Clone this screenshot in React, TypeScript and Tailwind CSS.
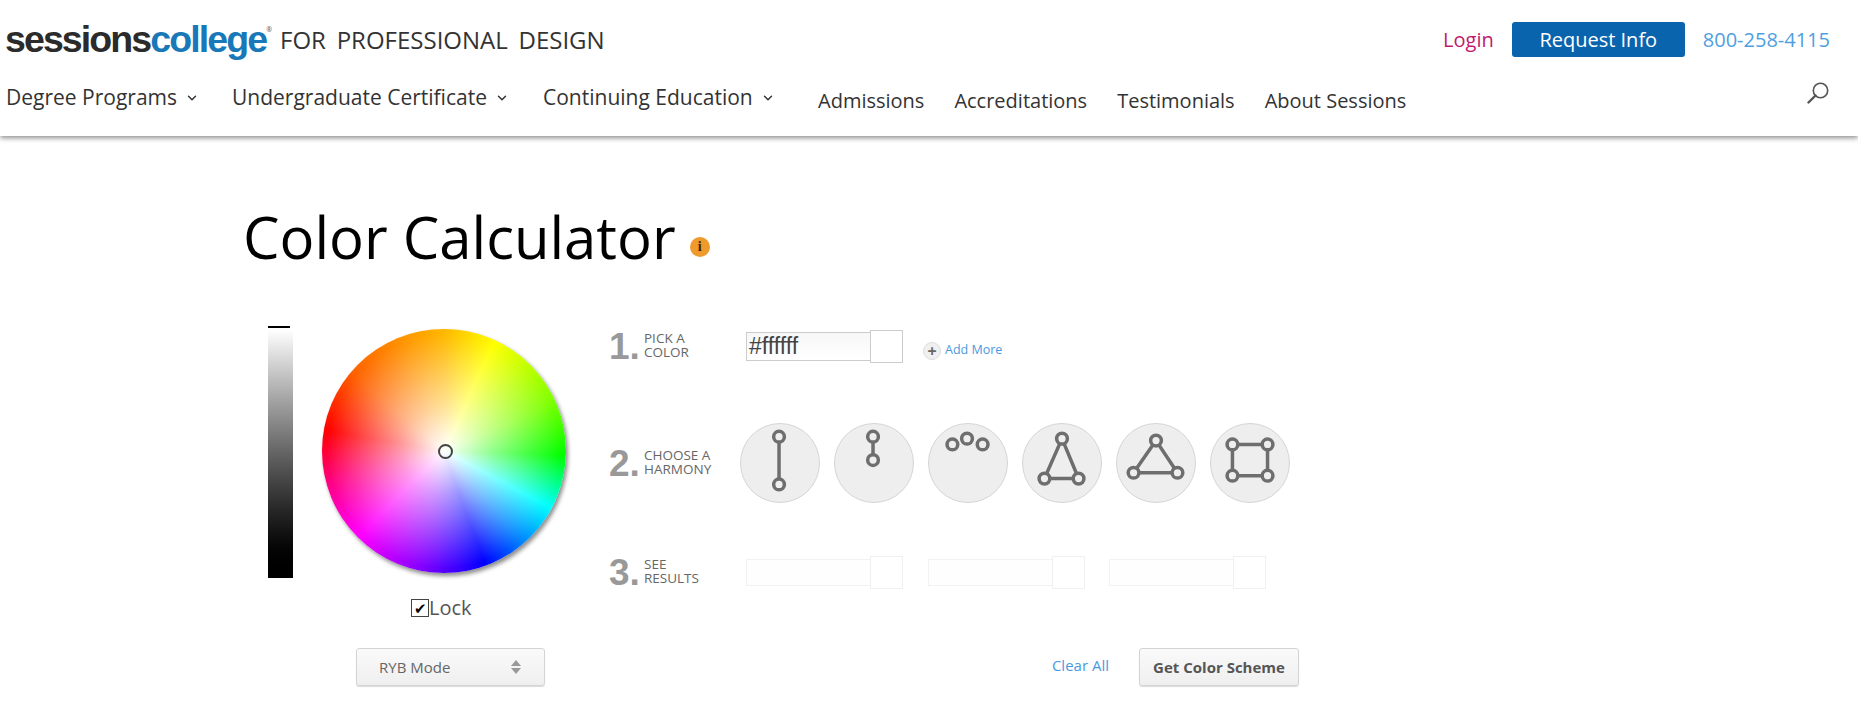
import { ChevronDown } from "lucide-react";

const font = "font-['Open_Sans',sans-serif]";

const Ring = ({ x, y }: { x: number; y: number }) => (
  <circle cx={x} cy={y} r="5.5" fill="#eeeeee" stroke="#6e6e6e" strokeWidth="3.6" />
);

const harmonies = [
  { lines: "M39 13V62", pts: [[39, 13], [39, 62]] },
  { lines: "M39 13V37", pts: [[39, 13], [39, 37]] },
  { lines: "", pts: [[24, 21], [39, 15], [55, 21]] },
  { lines: "M40 15L22 56H57Z", pts: [[40, 15], [22, 56], [57, 56]] },
  { lines: "M40 17L17 50H62Z", pts: [[40, 17], [17, 50], [62, 50]] },
  { lines: "M22 21H58V53H22Z", pts: [[22, 21], [58, 21], [22, 53], [58, 53]] },
];

const StepLabel = ({ n, a, b }: { n: string; a: string; b: string }) => (
  <div className="flex items-center w-[137px] shrink-0">
    <span className="w-[35px] text-[37px] leading-none font-bold text-[#999999] font-['Liberation_Sans',sans-serif]">{n}.</span>
    <span className="-mt-[2px] text-[13.5px] leading-[14px] text-[#666666] uppercase">
      {a}
      <br />
      {b}
    </span>
  </div>
);

const ResultSwatch = ({ w }: { w: string }) => (
  <div className={`flex items-center ${w}`}>
    <div className="w-[125px] h-[27px] border border-[#f2f2f2] bg-[#fefefe]"></div>
    <div className="-ml-px w-[33px] h-[33px] border border-[#f0f0f0] bg-white"></div>
  </div>
);

export default function App() {
  return (
    <div className={`h-[709px] overflow-hidden bg-white text-[#333333] ${font}`}>
      <header className="h-[136px] bg-white shadow-[0_2px_5px_rgba(0,0,0,0.45)]">
        <div className="flex items-center justify-between pl-[5px] pr-[28px] pt-[22px] h-[57px]">
          <div className="flex items-center">
            <span className="text-[37.5px] leading-none font-bold tracking-[-1.9px] text-[#2b2b2b] font-['Liberation_Sans',sans-serif]">
              sessions<span className="text-[#1878b8]">college</span>
            </span>
            <span className="text-[7px] self-start mt-1 text-[#555555]">®</span>
            <span className="ml-[8px] text-[24px] leading-none text-[#333333] [word-spacing:4.5px]">FOR PROFESSIONAL DESIGN</span>
          </div>
          <div className="flex items-center text-[20px]">
            <a className="text-[#bf1a6e]">Login</a>
            <a className="ml-[18px] w-[173px] h-[35px] rounded-[3px] bg-[#0a64ad] text-white flex items-center justify-center">Request Info</a>
            <a className="ml-[18px] text-[#4f9fe0]">800-258-4115</a>
          </div>
        </div>
        <nav className="flex items-start justify-between pl-[6px] pr-[29px] pt-[25px]">
          <div className="flex items-start text-[20px] text-[#333333]">
            <a className="flex items-center w-[226px] text-[21px]">Degree Programs<ChevronDown className="ml-2 w-[14px] h-[14px]" strokeWidth={2.5} /></a>
            <a className="flex items-center w-[311px] text-[21px]">Undergraduate Certificate<ChevronDown className="ml-2 w-[14px] h-[14px]" strokeWidth={2.5} /></a>
            <a className="flex items-center w-[275px] text-[21px]">Continuing Education<ChevronDown className="ml-2 w-[14px] h-[14px]" strokeWidth={2.5} /></a>
            <div className="flex gap-[30px] pt-[4px]">
              <a>Admissions</a>
              <a>Accreditations</a>
              <a>Testimonials</a>
              <a>About Sessions</a>
            </div>
          </div>
          <svg className="w-[22px] h-[22px]" viewBox="0 0 22 22" fill="none" stroke="#555555">
            <circle cx="13.5" cy="8.5" r="7.2" strokeWidth="1.6" />
            <path d="M8.5 13.5L1.5 20.5" strokeWidth="2.4" strokeLinecap="round" />
          </svg>
        </nav>
      </header>

      <main className="pl-[243px]">
        <div className="flex items-center pt-[54px] h-[148px]">
          <h1 className="text-[58px] leading-[80px] font-normal text-black">Color Calculator</h1>
          <span className="ml-[14px] mt-[20px] w-[20px] h-[20px] rounded-full bg-[#ee9a2c] text-[#3b2606] text-[14px] font-bold leading-[20px] text-center font-['Liberation_Serif',serif]">i</span>
        </div>

        <div className="flex pt-[42px]">
          {/* wheel column */}
          <div className="w-[366px] shrink-0 pl-[25px]">
            <div className="flex">
              <div className="w-[25px]">
                <div className="w-[22px] h-[2px] bg-black"></div>
                <div className="mt-[2px] w-[25px] h-[248px] bg-gradient-to-b from-white to-black"></div>
              </div>
              <div className="relative ml-[29px] mt-[3px] w-[244px] h-[244px] rounded-full shadow-[2px_3px_4px_rgba(0,0,0,0.45)] [background:radial-gradient(circle,rgba(255,255,255,1)_0%,rgba(255,255,255,0.6)_25%,rgba(255,255,255,0)_68%),conic-gradient(from_0deg,#ffb800_0deg,#ffff00_25deg,#80ff00_65deg,#00ff00_92deg,#00ffff_118deg,#0080ff_140deg,#0000ff_160deg,#8000ff_190deg,#ff00ff_225deg,#ff0080_255deg,#ff0000_280deg,#ff6000_310deg,#ffb800_360deg)]">
                <div className="absolute left-[116px] top-[115px] w-[15px] h-[15px] rounded-full border-2 border-[#444444]"></div>
              </div>
            </div>
            <div className="flex items-center pl-[143px] mt-[18px] h-[24px] text-[20px] text-[#555555]">
              <span className="w-[18px] h-[18px] border border-[#444444] bg-white flex items-center justify-center text-[15px] leading-none text-black">✔</span>
              <span>Lock</span>
            </div>
            <div className="ml-[88px] mt-[28px] w-[189px] h-[38px] rounded-[3px] border border-[#d4d4d4] bg-gradient-to-b from-[#fafafa] to-[#efefef] shadow-[0_1px_1px_rgba(0,0,0,0.15)] flex items-center justify-between pl-[22px] pr-[23px] text-[15px] text-[#666666]">
              <span>RYB Mode</span>
              <span className="flex flex-col gap-[2px]">
                <span className="w-0 h-0 border-x-[5px] border-x-transparent border-b-[6px] border-b-[#999999]"></span>
                <span className="w-0 h-0 border-x-[5px] border-x-transparent border-t-[6px] border-t-[#999999]"></span>
              </span>
            </div>
          </div>

          {/* steps */}
          <div className="w-[700px]">
            <div className="flex items-center h-[34px] mt-[3px]">
              <StepLabel n="1" a="Pick a" b="Color" />
              <div className="flex items-center">
                <div className="w-[125px] h-[29px] border border-[#cccccc] bg-gradient-to-b from-[#f7f7f7] to-white pl-[2px] text-[23px] leading-[26px] text-[#444444] font-['Liberation_Sans',sans-serif]">#ffffff</div>
                <div className="-ml-px w-[33px] h-[33px] border border-[#cccccc] bg-white"></div>
              </div>
              <div className="flex items-center ml-[20px] mt-[9px] text-[12.5px] text-[#4a9ae0]">
                <span className="w-[18px] h-[18px] rounded-full border border-[#dddddd] bg-[#f0f0f0] text-[#666666] flex items-center justify-center text-[16px] leading-none font-bold">+</span>
                <span className="ml-[4px]">Add More</span>
              </div>
            </div>

            <div className="flex items-center h-[80px] mt-[60px]">
              <StepLabel n="2" a="Choose a" b="Harmony" />
              <div className="flex gap-[14px] -ml-[6px]">
                {harmonies.map((h, i) => (
                  <svg key={i} className="w-[80px] h-[80px] rounded-full border border-[#d5d5d5] bg-[#eeeeee]" viewBox="0 0 80 80" fill="none">
                    {h.lines && <path d={h.lines} stroke="#6e6e6e" strokeWidth="3.6" />}
                    {h.pts.map((p, j) => (
                      <Ring key={j} x={p[0]} y={p[1]} />
                    ))}
                  </svg>
                ))}
              </div>
            </div>

            <div className="flex items-center h-[34px] mt-[52px]">
              <StepLabel n="3" a="See" b="Results" />
              <ResultSwatch w="w-[182px]" />
              <ResultSwatch w="w-[181px]" />
              <ResultSwatch w="" />
            </div>

            <div className="flex items-center justify-end h-[38px] mt-[59px] pr-[10px]">
              <a className="text-[15px] text-[#4a9ae0] mr-[30px] -mt-[4px]">Clear All</a>
              <button className="w-[160px] h-[38px] rounded-[3px] border border-[#d4d4d4] bg-gradient-to-b from-[#fafafa] to-[#efefef] shadow-[0_1px_1px_rgba(0,0,0,0.15)] text-[15px] font-bold text-[#555555]">Get Color Scheme</button>
            </div>
          </div>
        </div>
      </main>
    </div>
  );
}
